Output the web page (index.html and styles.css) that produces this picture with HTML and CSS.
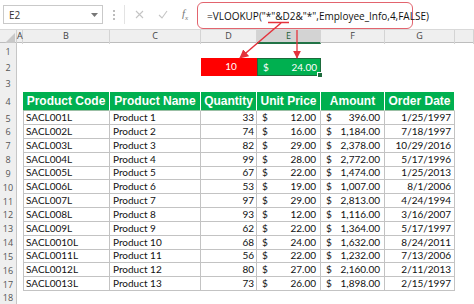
FILE: index.html
```html
<!DOCTYPE html>
<html>
<head>
<meta charset="utf-8">
<link rel="stylesheet" href="styles.css">
</head>
<body>
<div class="app">
  <div class="fbar">
    <div class="namebox"><span>E2</span><svg class="dd" width="7" height="4" viewBox="0 0 7 4"><path d="M0 0H7L3.5 4Z" fill="#777"/></svg></div>
    <div class="grip"><i></i><i></i><i></i></div>
    <div class="fbtns">
      <svg width="9" height="9" viewBox="0 0 9 9"><path d="M1 1L8 8M8 1L1 8" stroke="#c4c4c4" stroke-width="1.1" fill="none"/></svg>
      <svg width="10" height="9" viewBox="0 0 10 9"><path d="M1 5L4 8L9 1" stroke="#c4c4c4" stroke-width="1.1" fill="none"/></svg>
      <span class="fx">f<sub>x</sub></span>
    </div>
    <div class="formula">=VLOOKUP("*"&amp;D2&amp;"*",Employee_Info,4,FALSE)</div>
  </div>
  <div class="sheet">
    <div class="row colhdr">
      <div class="corner"><svg width="10" height="10" viewBox="0 0 10 10"><path d="M10 0V10H0Z" fill="#c8c8c8"/></svg></div>
      <div class="ch">A</div><div class="ch">B</div><div class="ch">C</div><div class="ch">D</div><div class="ch sel">E</div><div class="ch">F</div><div class="ch">G</div><div class="ch"></div>
    </div>
    <div class="row r1"><div class="rh">1</div></div>
    <div class="row r2"><div class="rh">2</div><div></div><div></div><div></div><div class="red">10</div><div class="green"><span>$</span><span>24.00</span><i class="handle"></i></div></div>
    <div class="row r3"><div class="rh">3</div></div>
    <div class="row r4 thead"><div class="rh">4</div><div></div><div class="th">Product Code</div><div class="th">Product Name</div><div class="th">Quantity</div><div class="th">Unit Price</div><div class="th">Amount</div><div class="th">Order Date</div></div>
    <div class="row dr"><div class="rh">5</div><div></div><div class="c">SACL001L</div><div class="c">Product 1</div><div class="c n">33</div><div class="c m"><span>$</span><span>12.00</span></div><div class="c m"><span>$</span><span>396.00</span></div><div class="c n d">1/25/1997</div></div>
    <div class="row dr"><div class="rh">6</div><div></div><div class="c">SACL002L</div><div class="c">Product 2</div><div class="c n">74</div><div class="c m"><span>$</span><span>16.00</span></div><div class="c m"><span>$</span><span>1,184.00</span></div><div class="c n d">7/18/1997</div></div>
    <div class="row dr"><div class="rh">7</div><div></div><div class="c">SACL003L</div><div class="c">Product 3</div><div class="c n">82</div><div class="c m"><span>$</span><span>29.00</span></div><div class="c m"><span>$</span><span>2,378.00</span></div><div class="c n d">10/29/2016</div></div>
    <div class="row dr"><div class="rh">8</div><div></div><div class="c">SACL004L</div><div class="c">Product 4</div><div class="c n">99</div><div class="c m"><span>$</span><span>28.00</span></div><div class="c m"><span>$</span><span>2,772.00</span></div><div class="c n d">5/17/1996</div></div>
    <div class="row dr"><div class="rh">9</div><div></div><div class="c">SACL005L</div><div class="c">Product 5</div><div class="c n">67</div><div class="c m"><span>$</span><span>22.00</span></div><div class="c m"><span>$</span><span>1,474.00</span></div><div class="c n d">1/25/2013</div></div>
    <div class="row dr"><div class="rh">10</div><div></div><div class="c">SACL006L</div><div class="c">Product 6</div><div class="c n">53</div><div class="c m"><span>$</span><span>19.00</span></div><div class="c m"><span>$</span><span>1,007.00</span></div><div class="c n d">8/1/2006</div></div>
    <div class="row dr"><div class="rh">11</div><div></div><div class="c">SACL007L</div><div class="c">Product 7</div><div class="c n">97</div><div class="c m"><span>$</span><span>29.00</span></div><div class="c m"><span>$</span><span>2,813.00</span></div><div class="c n d">4/24/1994</div></div>
    <div class="row dr"><div class="rh">12</div><div></div><div class="c">SACL008L</div><div class="c">Product 8</div><div class="c n">93</div><div class="c m"><span>$</span><span>12.00</span></div><div class="c m"><span>$</span><span>1,116.00</span></div><div class="c n d">3/16/2007</div></div>
    <div class="row dr"><div class="rh">13</div><div></div><div class="c">SACL009L</div><div class="c">Product 9</div><div class="c n">62</div><div class="c m"><span>$</span><span>22.00</span></div><div class="c m"><span>$</span><span>1,364.00</span></div><div class="c n d">5/17/1997</div></div>
    <div class="row dr"><div class="rh">14</div><div></div><div class="c">SACL0010L</div><div class="c">Product 10</div><div class="c n">68</div><div class="c m"><span>$</span><span>24.00</span></div><div class="c m"><span>$</span><span>1,632.00</span></div><div class="c n d">8/24/2011</div></div>
    <div class="row dr"><div class="rh">15</div><div></div><div class="c">SACL0011L</div><div class="c">Product 11</div><div class="c n">56</div><div class="c m"><span>$</span><span>22.00</span></div><div class="c m"><span>$</span><span>1,232.00</span></div><div class="c n d">7/13/2006</div></div>
    <div class="row dr"><div class="rh">16</div><div></div><div class="c">SACL0012L</div><div class="c">Product 12</div><div class="c n">80</div><div class="c m"><span>$</span><span>27.00</span></div><div class="c m"><span>$</span><span>2,160.00</span></div><div class="c n d">2/11/2013</div></div>
    <div class="row dr"><div class="rh">17</div><div></div><div class="c">SACL0013L</div><div class="c">Product 13</div><div class="c n">73</div><div class="c m"><span>$</span><span>26.00</span></div><div class="c m"><span>$</span><span>1,898.00</span></div><div class="c n d">2/15/1997</div></div>
    <div class="row r18"><div class="rh">18</div></div>
    <div class="row r19"><div class="rh"></div></div>
  </div>
  <svg class="arrows" width="474" height="304" viewBox="0 0 474 304">
    <defs>
      <marker id="ah" viewBox="0 0 10 10" refX="9" refY="5" markerWidth="6" markerHeight="6" orient="auto">
        <path d="M0 0L10 5L0 10Z" fill="#e4323c"/>
      </marker>
    </defs>
    <path d="M268 22.5H289" stroke="#e4323c" stroke-width="1.5"/>
    <path d="M281 23L240 58" stroke="#e4323c" stroke-width="1.5" marker-end="url(#ah)"/>
    <path d="M297 30V58" stroke="#e4323c" stroke-width="1.3" marker-end="url(#ah)"/>
  </svg>
</div>
</body>
</html>
```

FILE: styles.css
```css
* { box-sizing: border-box; margin: 0; padding: 0; }
html, body { width: 474px; height: 304px; overflow: hidden; background: #fff; }
body { font-family: Lato, "Open Sans", sans-serif; color: #000; }
.app { position: relative; width: 474px; height: 304px; overflow: hidden; }

.fbar { height: 30px; display: flex; align-items: center; background: #fff; border-bottom: 1px solid #d9d9d9; }
.namebox { margin-left: 3px; width: 100px; height: 19px; border: 1px solid #c9c9c9; display: flex; align-items: center; justify-content: space-between; padding: 0 4px 0 5px; font-family: "Open Sans", sans-serif; font-size: 10px; color: #333; }
.grip { width: 21px; display: flex; flex-direction: column; align-items: center; gap: 2px; }
.grip i { width: 2px; height: 2px; background: #bdbdbd; display: block; }
.fbtns { width: 73px; height: 19px; display: flex; align-items: center; gap: 14px; padding-left: 10px; border-left: 1px solid #e3e3e3; }
.fx { font-family: "Liberation Serif", serif; font-style: italic; font-size: 11px; color: #777; }
.fx sub { font-size: 7px; }
.formula { width: 216px; height: 27px; margin-top: 2px; border: 1.5px solid #e2646e; border-radius: 6px; display: flex; align-items: center; padding-left: 9px; font-family: "Open Sans", sans-serif; font-size: 10px; letter-spacing: 0; color: #111; white-space: nowrap; }

.sheet { display: flex; flex-direction: column; }
.row { display: grid; grid-template-columns: 17px 6px 87px 91px 56px 64px 64px 70px 19px; }
.colhdr { height: 13px; background: #efefef; border-bottom: 1px solid #bdbdbd; }
.corner { display: flex; align-items: flex-end; justify-content: flex-end; padding: 0 1px 1px 0; border-right: 1px solid #d0d0d0; }
.ch { font-family: "Open Sans", sans-serif; font-size: 9px; color: #444; text-align: center; line-height: 12px; border-right: 1px solid #d4d4d4; }
.ch.sel { background: #d3d3d3; border-bottom: 2px solid #217346; color: #1e5e38; }
.rh { background: #efefef; border-right: 1px solid #c6c6c6; font-family: "Open Sans", sans-serif; font-size: 9px; color: #555; display: flex; align-items: center; justify-content: center; }
.r1 { height: 16px; }
.r2 { height: 17px; }
.r3 { height: 15px; }
.r4 { height: 20px; }
.dr { height: 13.85px; }
.r18 { height: 14px; }
.r19 { height: 14px; }

.red { background: #ff0000; color: #fff; font-size: 10px; text-align: center; line-height: 17px; margin-top: -1px; padding-left: 4px; }
.green { position: relative; background: #00b050; color: #fff; font-size: 10px; display: flex; justify-content: space-between; align-items: center; padding: 0 3px 0 5px; margin-top: -1px; border: 1.5px solid #1d6b3c; }
.handle { position: absolute; right: -3px; bottom: -3px; width: 4px; height: 4px; background: #1d6b3c; border: 1px solid #fff; box-sizing: content-box; }

.thead .th { background: #00b050; color: #fff; font-family: "Liberation Sans", Arial, sans-serif; font-weight: bold; font-size: 12px; display: flex; align-items: center; justify-content: center; border-right: 1px solid #fff; border-bottom: 1px solid #9bbfa5; white-space: nowrap; margin-top: 1px; }

.c { border-right: 1px solid #c3c3c3; border-bottom: 1px solid #c3c3c3; font-size: 10px; line-height: 13px; padding: 0 2px 0 2px; white-space: nowrap; color: #111; }
.dr .c:nth-child(3) { border-left: 1px solid #c3c3c3; }
.dr .c:nth-child(4) { padding-left: 3px; }
.c.n { text-align: right; padding-right: 2px; }
.c.d { padding-right: 3px; }
.c.m { display: flex; justify-content: space-between; padding: 0 4px 0 5px; }

.arrows { position: absolute; left: 0; top: 0; pointer-events: none; }
```
